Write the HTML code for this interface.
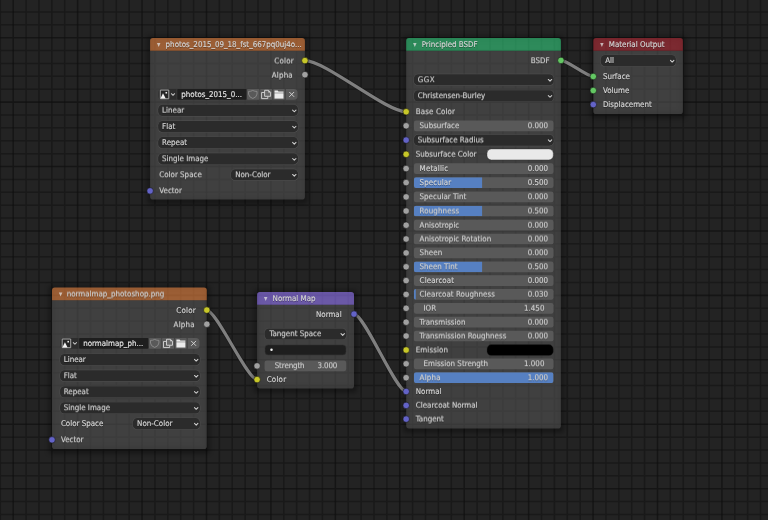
<!DOCTYPE html>
<html lang="en"><head><meta charset="utf-8"><title>Shader Node Editor</title>
<style>html,body{margin:0;padding:0;background:#232323;overflow:hidden}body{width:768px;height:520px}svg{display:block}text{font-family:"DejaVu Sans Condensed","Liberation Sans",sans-serif;white-space:pre}</style>
</head><body>
<svg width="768" height="520" viewBox="0 0 768 520" role="img" aria-label="Blender shader node editor">
<defs><filter id="sh" x="-20%" y="-20%" width="140%" height="140%" color-interpolation-filters="sRGB"><feGaussianBlur stdDeviation="2.4"/></filter><filter id="soft" x="0" y="0" width="768" height="520" filterUnits="userSpaceOnUse" color-interpolation-filters="sRGB"><feGaussianBlur stdDeviation="0.45"/></filter><filter id="t0" x="-5%" y="-40%" width="110%" height="200%" color-interpolation-filters="sRGB"><feConvolveMatrix order="1 2" kernelMatrix="1 0" edgeMode="none" result="g"/><feConvolveMatrix in="g" order="1 2" kernelMatrix="0.2 0.8" edgeMode="none" result="o"/><feColorMatrix in="o" type="matrix" values="0 0 0 0 0  0 0 0 0 0  0 0 0 0 0  0 0 0 0.36 0" result="s"/><feMerge><feMergeNode in="s"/><feMergeNode in="g"/></feMerge></filter><filter id="t1" x="-5%" y="-40%" width="110%" height="200%" color-interpolation-filters="sRGB"><feConvolveMatrix order="1 2" kernelMatrix="0.75 0.25" edgeMode="none" result="g"/><feConvolveMatrix in="g" order="1 2" kernelMatrix="0.2 0.8" edgeMode="none" result="o"/><feColorMatrix in="o" type="matrix" values="0 0 0 0 0  0 0 0 0 0  0 0 0 0 0  0 0 0 0.36 0" result="s"/><feMerge><feMergeNode in="s"/><feMergeNode in="g"/></feMerge></filter><filter id="t2" x="-5%" y="-40%" width="110%" height="200%" color-interpolation-filters="sRGB"><feConvolveMatrix order="1 2" kernelMatrix="0.5 0.5" edgeMode="none" result="g"/><feConvolveMatrix in="g" order="1 2" kernelMatrix="0.2 0.8" edgeMode="none" result="o"/><feColorMatrix in="o" type="matrix" values="0 0 0 0 0  0 0 0 0 0  0 0 0 0 0  0 0 0 0.36 0" result="s"/><feMerge><feMergeNode in="s"/><feMergeNode in="g"/></feMerge></filter><filter id="t3" x="-5%" y="-40%" width="110%" height="200%" color-interpolation-filters="sRGB"><feConvolveMatrix order="1 2" kernelMatrix="0.25 0.75" edgeMode="none" result="g"/><feConvolveMatrix in="g" order="1 2" kernelMatrix="0.2 0.8" edgeMode="none" result="o"/><feColorMatrix in="o" type="matrix" values="0 0 0 0 0  0 0 0 0 0  0 0 0 0 0  0 0 0 0.36 0" result="s"/><feMerge><feMergeNode in="s"/><feMergeNode in="g"/></feMerge></filter></defs>
<rect width="768" height="520" fill="#232323"/>
<g filter="url(#soft)">
<rect width="768" height="520" fill="#232323"/>
<g stroke="#191919" stroke-width="1.5" opacity="0.95">
<line x1="0.30" y1="0" x2="0.30" y2="520"/>
<line x1="26.07" y1="0" x2="26.07" y2="520"/>
<line x1="38.96" y1="0" x2="38.96" y2="520"/>
<line x1="51.84" y1="0" x2="51.84" y2="520"/>
<line x1="64.73" y1="0" x2="64.73" y2="520"/>
<line x1="90.50" y1="0" x2="90.50" y2="520"/>
<line x1="103.39" y1="0" x2="103.39" y2="520"/>
<line x1="116.27" y1="0" x2="116.27" y2="520"/>
<line x1="129.16" y1="0" x2="129.16" y2="520"/>
<line x1="154.93" y1="0" x2="154.93" y2="520"/>
<line x1="167.82" y1="0" x2="167.82" y2="520"/>
<line x1="180.70" y1="0" x2="180.70" y2="520"/>
<line x1="193.59" y1="0" x2="193.59" y2="520"/>
<line x1="219.36" y1="0" x2="219.36" y2="520"/>
<line x1="232.25" y1="0" x2="232.25" y2="520"/>
<line x1="245.13" y1="0" x2="245.13" y2="520"/>
<line x1="258.02" y1="0" x2="258.02" y2="520"/>
<line x1="283.79" y1="0" x2="283.79" y2="520"/>
<line x1="296.68" y1="0" x2="296.68" y2="520"/>
<line x1="309.56" y1="0" x2="309.56" y2="520"/>
<line x1="322.45" y1="0" x2="322.45" y2="520"/>
<line x1="348.22" y1="0" x2="348.22" y2="520"/>
<line x1="361.11" y1="0" x2="361.11" y2="520"/>
<line x1="373.99" y1="0" x2="373.99" y2="520"/>
<line x1="386.88" y1="0" x2="386.88" y2="520"/>
<line x1="412.65" y1="0" x2="412.65" y2="520"/>
<line x1="425.54" y1="0" x2="425.54" y2="520"/>
<line x1="438.42" y1="0" x2="438.42" y2="520"/>
<line x1="451.31" y1="0" x2="451.31" y2="520"/>
<line x1="477.08" y1="0" x2="477.08" y2="520"/>
<line x1="489.97" y1="0" x2="489.97" y2="520"/>
<line x1="502.85" y1="0" x2="502.85" y2="520"/>
<line x1="515.74" y1="0" x2="515.74" y2="520"/>
<line x1="541.51" y1="0" x2="541.51" y2="520"/>
<line x1="554.40" y1="0" x2="554.40" y2="520"/>
<line x1="567.28" y1="0" x2="567.28" y2="520"/>
<line x1="580.17" y1="0" x2="580.17" y2="520"/>
<line x1="605.94" y1="0" x2="605.94" y2="520"/>
<line x1="618.83" y1="0" x2="618.83" y2="520"/>
<line x1="631.71" y1="0" x2="631.71" y2="520"/>
<line x1="644.60" y1="0" x2="644.60" y2="520"/>
<line x1="670.37" y1="0" x2="670.37" y2="520"/>
<line x1="683.26" y1="0" x2="683.26" y2="520"/>
<line x1="696.14" y1="0" x2="696.14" y2="520"/>
<line x1="709.03" y1="0" x2="709.03" y2="520"/>
<line x1="734.80" y1="0" x2="734.80" y2="520"/>
<line x1="747.69" y1="0" x2="747.69" y2="520"/>
<line x1="760.57" y1="0" x2="760.57" y2="520"/>
<line x1="0" y1="-0.99" x2="768" y2="-0.99"/>
<line x1="0" y1="11.90" x2="768" y2="11.90"/>
<line x1="0" y1="24.79" x2="768" y2="24.79"/>
<line x1="0" y1="50.56" x2="768" y2="50.56"/>
<line x1="0" y1="63.44" x2="768" y2="63.44"/>
<line x1="0" y1="76.33" x2="768" y2="76.33"/>
<line x1="0" y1="89.22" x2="768" y2="89.22"/>
<line x1="0" y1="114.99" x2="768" y2="114.99"/>
<line x1="0" y1="127.87" x2="768" y2="127.87"/>
<line x1="0" y1="140.76" x2="768" y2="140.76"/>
<line x1="0" y1="153.65" x2="768" y2="153.65"/>
<line x1="0" y1="179.42" x2="768" y2="179.42"/>
<line x1="0" y1="192.30" x2="768" y2="192.30"/>
<line x1="0" y1="205.19" x2="768" y2="205.19"/>
<line x1="0" y1="218.08" x2="768" y2="218.08"/>
<line x1="0" y1="243.85" x2="768" y2="243.85"/>
<line x1="0" y1="256.73" x2="768" y2="256.73"/>
<line x1="0" y1="269.62" x2="768" y2="269.62"/>
<line x1="0" y1="282.51" x2="768" y2="282.51"/>
<line x1="0" y1="308.28" x2="768" y2="308.28"/>
<line x1="0" y1="321.16" x2="768" y2="321.16"/>
<line x1="0" y1="334.05" x2="768" y2="334.05"/>
<line x1="0" y1="346.94" x2="768" y2="346.94"/>
<line x1="0" y1="372.71" x2="768" y2="372.71"/>
<line x1="0" y1="385.59" x2="768" y2="385.59"/>
<line x1="0" y1="398.48" x2="768" y2="398.48"/>
<line x1="0" y1="411.37" x2="768" y2="411.37"/>
<line x1="0" y1="437.14" x2="768" y2="437.14"/>
<line x1="0" y1="450.02" x2="768" y2="450.02"/>
<line x1="0" y1="462.91" x2="768" y2="462.91"/>
<line x1="0" y1="475.80" x2="768" y2="475.80"/>
<line x1="0" y1="501.57" x2="768" y2="501.57"/>
<line x1="0" y1="514.45" x2="768" y2="514.45"/>
</g>
<g stroke="#0e0e0e" stroke-width="1.55" opacity="0.62">
<line x1="13.19" y1="0" x2="13.19" y2="520"/>
<line x1="77.62" y1="0" x2="77.62" y2="520"/>
<line x1="142.05" y1="0" x2="142.05" y2="520"/>
<line x1="206.48" y1="0" x2="206.48" y2="520"/>
<line x1="270.91" y1="0" x2="270.91" y2="520"/>
<line x1="335.34" y1="0" x2="335.34" y2="520"/>
<line x1="399.77" y1="0" x2="399.77" y2="520"/>
<line x1="464.20" y1="0" x2="464.20" y2="520"/>
<line x1="528.63" y1="0" x2="528.63" y2="520"/>
<line x1="593.06" y1="0" x2="593.06" y2="520"/>
<line x1="657.49" y1="0" x2="657.49" y2="520"/>
<line x1="721.92" y1="0" x2="721.92" y2="520"/>
<line x1="0" y1="37.67" x2="768" y2="37.67"/>
<line x1="0" y1="102.10" x2="768" y2="102.10"/>
<line x1="0" y1="166.53" x2="768" y2="166.53"/>
<line x1="0" y1="230.96" x2="768" y2="230.96"/>
<line x1="0" y1="295.39" x2="768" y2="295.39"/>
<line x1="0" y1="359.82" x2="768" y2="359.82"/>
<line x1="0" y1="424.25" x2="768" y2="424.25"/>
<line x1="0" y1="488.68" x2="768" y2="488.68"/>
</g>
<path d="M305.00 60.60 C325.22 60.60 385.88 111.75 406.10 111.75" fill="none" stroke="#141414" stroke-width="4.4" stroke-linecap="round" opacity="0.6"/>
<path d="M305.00 60.60 C325.22 60.60 385.88 111.75 406.10 111.75" fill="none" stroke="#7f7f7f" stroke-width="3.2" stroke-linecap="round"/>
<path d="M206.50 310.00 C216.62 310.00 246.98 379.60 257.10 379.60" fill="none" stroke="#141414" stroke-width="4.4" stroke-linecap="round" opacity="0.6"/>
<path d="M206.50 310.00 C216.62 310.00 246.98 379.60 257.10 379.60" fill="none" stroke="#7f7f7f" stroke-width="3.2" stroke-linecap="round"/>
<path d="M354.00 314.10 C364.44 314.10 395.76 391.50 406.20 391.50" fill="none" stroke="#141414" stroke-width="4.4" stroke-linecap="round" opacity="0.6"/>
<path d="M354.00 314.10 C364.44 314.10 395.76 391.50 406.20 391.50" fill="none" stroke="#7f7f7f" stroke-width="3.2" stroke-linecap="round"/>
<path d="M560.90 60.40 C567.36 60.40 586.74 76.50 593.20 76.50" fill="none" stroke="#141414" stroke-width="4.4" stroke-linecap="round" opacity="0.6"/>
<path d="M560.90 60.40 C567.36 60.40 586.74 76.50 593.20 76.50" fill="none" stroke="#7f7f7f" stroke-width="3.2" stroke-linecap="round"/>
<path fill-rule="evenodd" d="M147.50 36.50 h160.00 v166.90 h-160.00 Z M151.70 39.70 h151.60 v158.30 h-151.60 Z" fill="#000" opacity="0.42" filter="url(#sh)"/>
<path d="M150.10 50.70 H304.90 V196.80 a2.8 2.8 0 0 1 -2.8 2.8 H152.90 a2.8 2.8 0 0 1 -2.8 -2.8 Z" fill="#535353" opacity="0.6"/>
<path d="M150.10 50.70 V40.90 a2.8 2.8 0 0 1 2.8 -2.8 H302.10 a2.8 2.8 0 0 1 2.8 2.8 V50.70 Z" fill="#ed8743" opacity="0.6"/>
<path d="M156.95 43.00 H160.45 L158.70 46.90 Z" fill="#e0e0e0" opacity="0.75"/>
<path d="M176.60 89.05 H162.30 a3.8 3.8 0 0 0 -3.8 3.8 V95.95 a3.8 3.8 0 0 0 3.8 3.8 H176.60 Z" fill="#2c2c2c"/>
<rect x="160.30" y="90.05" width="8.5" height="8.7" rx="0.2" fill="#262626" stroke="#eeeeee" stroke-width="0.65"/>
<path d="M160.50 98.55 L163.00 93.35 L165.70 98.55 Z" fill="#f2f2f2"/>
<rect x="165.50" y="91.95" width="1.6" height="1.6" fill="#ececec"/>
<path d="M171.40 93.70 L173.00 95.30 L174.60 93.70" fill="none" stroke="#c4c4c4" stroke-width="1.05" stroke-linecap="round" stroke-linejoin="round"/>
<rect x="177.20" y="89.05" width="69.20" height="10.70" rx="0.8" ry="0.8" fill="#1e1e1e"/>
<rect x="247.10" y="89.05" width="12.40" height="10.70" rx="0.8" ry="0.8" fill="#595959"/>
<rect x="260.10" y="89.05" width="12.20" height="10.70" rx="0.8" ry="0.8" fill="#595959"/>
<rect x="273.20" y="89.05" width="11.60" height="10.70" rx="0.8" ry="0.8" fill="#595959"/>
<path d="M285.80 89.05 H293.80 a3.8 3.8 0 0 1 3.8 3.8 V95.95 a3.8 3.8 0 0 1 -3.8 3.8 H285.80 Z" fill="#595959"/>
<path d="M252.80 90.50 Q255.00 91.50 257.00 91.40 V94.10 Q256.70 97.20 252.80 98.50 Q248.90 97.20 248.60 94.10 V91.40 Q250.60 91.50 252.80 90.50 Z" fill="none" stroke="#939393" stroke-width="0.8" stroke-linejoin="round"/>
<path d="M264.60 92.50 H261.60 V98.60 H267.80 V96.40" fill="none" stroke="#dedede" stroke-width="0.85"/>
<path d="M264.60 90.30 H268.60 L270.60 92.30 V96.30 H264.60 Z" fill="#6a6a6a" stroke="#dedede" stroke-width="0.85" stroke-linejoin="round"/>
<path d="M268.40 90.30 V92.40 H270.60 Z" fill="#e6e6e6"/>
<path d="M274.50 90.50 H277.60 L278.50 91.50 H283.50 V92.80 H274.50 Z" fill="#ececec"/>
<rect x="274.50" y="93.25" width="9.0" height="5.35" fill="#ececec"/>
<path d="M289.30 92.00 L294.10 96.80 M294.10 92.00 L289.30 96.80" stroke="#dcdcdc" stroke-width="0.9" fill="none"/>
<rect x="157.70" y="104.40" width="140.80" height="12.10" rx="4.8" ry="4.8" fill="#555555" opacity="0.8"/>
<rect x="158.15" y="104.75" width="139.90" height="11.20" rx="4.4" ry="4.4" fill="#2b2b2b"/>
<path d="M292.60 110.05 L294.30 111.75 L296.00 110.05" fill="none" stroke="#d0d0d0" stroke-width="1.05" stroke-linecap="round" stroke-linejoin="round"/>
<rect x="157.70" y="120.60" width="140.80" height="12.10" rx="4.8" ry="4.8" fill="#555555" opacity="0.8"/>
<rect x="158.15" y="120.95" width="139.90" height="11.20" rx="4.4" ry="4.4" fill="#2b2b2b"/>
<path d="M292.60 126.25 L294.30 127.95 L296.00 126.25" fill="none" stroke="#d0d0d0" stroke-width="1.05" stroke-linecap="round" stroke-linejoin="round"/>
<rect x="157.70" y="136.75" width="140.80" height="12.10" rx="4.8" ry="4.8" fill="#555555" opacity="0.8"/>
<rect x="158.15" y="137.10" width="139.90" height="11.20" rx="4.4" ry="4.4" fill="#2b2b2b"/>
<path d="M292.60 142.40 L294.30 144.10 L296.00 142.40" fill="none" stroke="#d0d0d0" stroke-width="1.05" stroke-linecap="round" stroke-linejoin="round"/>
<rect x="157.70" y="152.85" width="140.80" height="12.10" rx="4.8" ry="4.8" fill="#555555" opacity="0.8"/>
<rect x="158.15" y="153.20" width="139.90" height="11.20" rx="4.4" ry="4.4" fill="#2b2b2b"/>
<path d="M292.60 158.50 L294.30 160.20 L296.00 158.50" fill="none" stroke="#d0d0d0" stroke-width="1.05" stroke-linecap="round" stroke-linejoin="round"/>
<rect x="230.50" y="168.80" width="68.00" height="12.10" rx="4.8" ry="4.8" fill="#555555" opacity="0.8"/>
<rect x="230.95" y="169.15" width="67.10" height="11.20" rx="4.4" ry="4.4" fill="#2b2b2b"/>
<path d="M292.60 174.45 L294.30 176.15 L296.00 174.45" fill="none" stroke="#d0d0d0" stroke-width="1.05" stroke-linecap="round" stroke-linejoin="round"/>
<circle cx="304.90" cy="60.60" r="3.25" fill="#c7c729" stroke="#161616" stroke-width="0.6"/>
<circle cx="304.90" cy="74.70" r="3.25" fill="#a1a1a1" stroke="#161616" stroke-width="0.6"/>
<circle cx="150.10" cy="190.90" r="3.25" fill="#6363c7" stroke="#161616" stroke-width="0.6"/>
<path fill-rule="evenodd" d="M49.40 286.00 h160.00 v166.90 h-160.00 Z M53.60 289.20 h151.60 v158.30 h-151.60 Z" fill="#000" opacity="0.42" filter="url(#sh)"/>
<path d="M52.00 300.20 H206.80 V446.30 a2.8 2.8 0 0 1 -2.8 2.8 H54.80 a2.8 2.8 0 0 1 -2.8 -2.8 Z" fill="#535353" opacity="0.6"/>
<path d="M52.00 300.20 V290.40 a2.8 2.8 0 0 1 2.8 -2.8 H204.00 a2.8 2.8 0 0 1 2.8 2.8 V300.20 Z" fill="#ed8743" opacity="0.6"/>
<path d="M58.85 292.50 H62.35 L60.60 296.40 Z" fill="#e0e0e0" opacity="0.75"/>
<path d="M78.50 338.00 H64.20 a3.8 3.8 0 0 0 -3.8 3.8 V344.90 a3.8 3.8 0 0 0 3.8 3.8 H78.50 Z" fill="#2c2c2c"/>
<rect x="62.20" y="339.00" width="8.5" height="8.7" rx="0.2" fill="#262626" stroke="#eeeeee" stroke-width="0.65"/>
<path d="M62.40 347.50 L64.90 342.30 L67.60 347.50 Z" fill="#f2f2f2"/>
<rect x="67.40" y="340.90" width="1.6" height="1.6" fill="#ececec"/>
<path d="M73.30 342.65 L74.90 344.25 L76.50 342.65" fill="none" stroke="#c4c4c4" stroke-width="1.05" stroke-linecap="round" stroke-linejoin="round"/>
<rect x="79.10" y="338.00" width="69.20" height="10.70" rx="0.8" ry="0.8" fill="#1e1e1e"/>
<rect x="149.00" y="338.00" width="12.40" height="10.70" rx="0.8" ry="0.8" fill="#595959"/>
<rect x="162.00" y="338.00" width="12.20" height="10.70" rx="0.8" ry="0.8" fill="#595959"/>
<rect x="175.10" y="338.00" width="11.60" height="10.70" rx="0.8" ry="0.8" fill="#595959"/>
<path d="M187.70 338.00 H195.70 a3.8 3.8 0 0 1 3.8 3.8 V344.90 a3.8 3.8 0 0 1 -3.8 3.8 H187.70 Z" fill="#595959"/>
<path d="M154.70 339.45 Q156.90 340.45 158.90 340.35 V343.05 Q158.60 346.15 154.70 347.45 Q150.80 346.15 150.50 343.05 V340.35 Q152.50 340.45 154.70 339.45 Z" fill="none" stroke="#939393" stroke-width="0.8" stroke-linejoin="round"/>
<path d="M166.50 341.45 H163.50 V347.55 H169.70 V345.35" fill="none" stroke="#dedede" stroke-width="0.85"/>
<path d="M166.50 339.25 H170.50 L172.50 341.25 V345.25 H166.50 Z" fill="#6a6a6a" stroke="#dedede" stroke-width="0.85" stroke-linejoin="round"/>
<path d="M170.30 339.25 V341.35 H172.50 Z" fill="#e6e6e6"/>
<path d="M176.40 339.45 H179.50 L180.40 340.45 H185.40 V341.75 H176.40 Z" fill="#ececec"/>
<rect x="176.40" y="342.20" width="9.0" height="5.35" fill="#ececec"/>
<path d="M191.20 340.95 L196.00 345.75 M196.00 340.95 L191.20 345.75" stroke="#dcdcdc" stroke-width="0.9" fill="none"/>
<rect x="59.60" y="353.70" width="140.80" height="12.10" rx="4.8" ry="4.8" fill="#555555" opacity="0.8"/>
<rect x="60.05" y="354.05" width="139.90" height="11.20" rx="4.4" ry="4.4" fill="#2b2b2b"/>
<path d="M194.50 359.35 L196.20 361.05 L197.90 359.35" fill="none" stroke="#d0d0d0" stroke-width="1.05" stroke-linecap="round" stroke-linejoin="round"/>
<rect x="59.60" y="369.80" width="140.80" height="12.10" rx="4.8" ry="4.8" fill="#555555" opacity="0.8"/>
<rect x="60.05" y="370.15" width="139.90" height="11.20" rx="4.4" ry="4.4" fill="#2b2b2b"/>
<path d="M194.50 375.45 L196.20 377.15 L197.90 375.45" fill="none" stroke="#d0d0d0" stroke-width="1.05" stroke-linecap="round" stroke-linejoin="round"/>
<rect x="59.60" y="385.90" width="140.80" height="12.10" rx="4.8" ry="4.8" fill="#555555" opacity="0.8"/>
<rect x="60.05" y="386.25" width="139.90" height="11.20" rx="4.4" ry="4.4" fill="#2b2b2b"/>
<path d="M194.50 391.55 L196.20 393.25 L197.90 391.55" fill="none" stroke="#d0d0d0" stroke-width="1.05" stroke-linecap="round" stroke-linejoin="round"/>
<rect x="59.60" y="401.95" width="140.80" height="12.10" rx="4.8" ry="4.8" fill="#555555" opacity="0.8"/>
<rect x="60.05" y="402.30" width="139.90" height="11.20" rx="4.4" ry="4.4" fill="#2b2b2b"/>
<path d="M194.50 407.60 L196.20 409.30 L197.90 407.60" fill="none" stroke="#d0d0d0" stroke-width="1.05" stroke-linecap="round" stroke-linejoin="round"/>
<rect x="132.40" y="417.75" width="68.00" height="12.10" rx="4.8" ry="4.8" fill="#555555" opacity="0.8"/>
<rect x="132.85" y="418.10" width="67.10" height="11.20" rx="4.4" ry="4.4" fill="#2b2b2b"/>
<path d="M194.50 423.40 L196.20 425.10 L197.90 423.40" fill="none" stroke="#d0d0d0" stroke-width="1.05" stroke-linecap="round" stroke-linejoin="round"/>
<circle cx="206.80" cy="310.10" r="3.25" fill="#c7c729" stroke="#161616" stroke-width="0.6"/>
<circle cx="206.80" cy="324.20" r="3.25" fill="#a1a1a1" stroke="#161616" stroke-width="0.6"/>
<circle cx="52.00" cy="439.85" r="3.25" fill="#6363c7" stroke="#161616" stroke-width="0.6"/>
<path fill-rule="evenodd" d="M254.50 290.50 h102.10 v101.80 h-102.10 Z M258.70 293.70 h93.70 v93.20 h-93.70 Z" fill="#000" opacity="0.42" filter="url(#sh)"/>
<path d="M257.10 304.70 H354.00 V385.70 a2.8 2.8 0 0 1 -2.8 2.8 H259.90 a2.8 2.8 0 0 1 -2.8 -2.8 Z" fill="#535353" opacity="0.6"/>
<path d="M257.10 304.70 V294.90 a2.8 2.8 0 0 1 2.8 -2.8 H351.20 a2.8 2.8 0 0 1 2.8 2.8 V304.70 Z" fill="#9b7dff" opacity="0.6"/>
<path d="M263.95 297.00 H267.45 L265.70 300.90 Z" fill="#e0e0e0" opacity="0.75"/>
<rect x="264.10" y="328.10" width="82.80" height="11.90" rx="4.8" ry="4.8" fill="#555555" opacity="0.8"/>
<rect x="264.55" y="328.45" width="81.90" height="11.00" rx="4.4" ry="4.4" fill="#2b2b2b"/>
<path d="M341.00 333.65 L342.70 335.35 L344.40 333.65" fill="none" stroke="#d0d0d0" stroke-width="1.05" stroke-linecap="round" stroke-linejoin="round"/>
<rect x="265.00" y="344.90" width="81.00" height="10.00" rx="3.2" ry="3.2" fill="#1e1e1e" stroke="#333" stroke-width="0.6"/>
<circle cx="271.50" cy="349.80" r="1.25" fill="#f4f4f4"/>
<rect x="264.60" y="360.45" width="81.60" height="10.70" rx="2.2" ry="2.2" fill="#595959"/>
<circle cx="354.00" cy="314.10" r="3.25" fill="#6363c7" stroke="#161616" stroke-width="0.6"/>
<circle cx="257.10" cy="365.90" r="3.25" fill="#a1a1a1" stroke="#161616" stroke-width="0.6"/>
<circle cx="257.10" cy="379.60" r="3.25" fill="#c7c729" stroke="#161616" stroke-width="0.6"/>
<path fill-rule="evenodd" d="M403.60 36.50 h159.90 v395.80 h-159.90 Z M407.80 39.70 h151.50 v387.20 h-151.50 Z" fill="#000" opacity="0.42" filter="url(#sh)"/>
<path d="M406.20 50.70 H560.90 V425.70 a2.8 2.8 0 0 1 -2.8 2.8 H409.00 a2.8 2.8 0 0 1 -2.8 -2.8 Z" fill="#535353" opacity="0.6"/>
<path d="M406.20 50.70 V40.90 a2.8 2.8 0 0 1 2.8 -2.8 H558.10 a2.8 2.8 0 0 1 2.8 2.8 V50.70 Z" fill="#35d080" opacity="0.6"/>
<path d="M413.05 43.00 H416.55 L414.80 46.90 Z" fill="#e0e0e0" opacity="0.75"/>
<circle cx="560.90" cy="60.40" r="3.25" fill="#63c763" stroke="#161616" stroke-width="0.6"/>
<rect x="413.40" y="73.80" width="140.80" height="12.10" rx="4.8" ry="4.8" fill="#555555" opacity="0.8"/>
<rect x="413.85" y="74.15" width="139.90" height="11.20" rx="4.4" ry="4.4" fill="#2b2b2b"/>
<path d="M548.30 79.45 L550.00 81.15 L551.70 79.45" fill="none" stroke="#d0d0d0" stroke-width="1.05" stroke-linecap="round" stroke-linejoin="round"/>
<rect x="413.40" y="89.90" width="140.80" height="12.10" rx="4.8" ry="4.8" fill="#555555" opacity="0.8"/>
<rect x="413.85" y="90.25" width="139.90" height="11.20" rx="4.4" ry="4.4" fill="#2b2b2b"/>
<path d="M548.30 95.55 L550.00 97.25 L551.70 95.55" fill="none" stroke="#d0d0d0" stroke-width="1.05" stroke-linecap="round" stroke-linejoin="round"/>
<circle cx="406.20" cy="111.75" r="3.25" fill="#c7c729" stroke="#161616" stroke-width="0.6"/>
<rect x="413.90" y="120.45" width="139.60" height="10.70" rx="2.2" ry="2.2" fill="#595959"/>
<circle cx="406.20" cy="125.80" r="3.25" fill="#a1a1a1" stroke="#161616" stroke-width="0.6"/>
<rect x="413.40" y="134.30" width="140.80" height="11.90" rx="4.8" ry="4.8" fill="#555555" opacity="0.8"/>
<rect x="413.85" y="134.65" width="139.90" height="11.00" rx="4.4" ry="4.4" fill="#2b2b2b"/>
<path d="M548.30 139.85 L550.00 141.55 L551.70 139.85" fill="none" stroke="#d0d0d0" stroke-width="1.05" stroke-linecap="round" stroke-linejoin="round"/>
<circle cx="406.20" cy="140.10" r="3.25" fill="#6363c7" stroke="#161616" stroke-width="0.6"/>
<rect x="487.00" y="148.90" width="66.30" height="11.00" rx="4.4" ry="4.4" fill="#e9e9e9" stroke="#2a2a2a" stroke-width="0.4"/>
<circle cx="406.20" cy="154.30" r="3.25" fill="#c7c729" stroke="#161616" stroke-width="0.6"/>
<rect x="413.90" y="163.25" width="139.60" height="10.70" rx="2.2" ry="2.2" fill="#595959"/>
<circle cx="406.20" cy="168.60" r="3.25" fill="#a1a1a1" stroke="#161616" stroke-width="0.6"/>
<rect x="413.90" y="177.25" width="139.60" height="10.70" rx="2.2" ry="2.2" fill="#595959"/>
<clipPath id="c236"><rect x="413.90" y="177.25" width="68.19" height="10.70"/></clipPath>
<rect x="413.90" y="177.25" width="139.60" height="10.70" rx="2.2" ry="2.2" fill="#5680c2" clip-path="url(#c236)"/>
<circle cx="406.20" cy="182.60" r="3.25" fill="#a1a1a1" stroke="#161616" stroke-width="0.6"/>
<rect x="413.90" y="191.55" width="139.60" height="10.70" rx="2.2" ry="2.2" fill="#595959"/>
<circle cx="406.20" cy="196.90" r="3.25" fill="#a1a1a1" stroke="#161616" stroke-width="0.6"/>
<rect x="413.90" y="205.65" width="139.60" height="10.70" rx="2.2" ry="2.2" fill="#595959"/>
<clipPath id="c242"><rect x="413.90" y="205.65" width="68.19" height="10.70"/></clipPath>
<rect x="413.90" y="205.65" width="139.60" height="10.70" rx="2.2" ry="2.2" fill="#5680c2" clip-path="url(#c242)"/>
<circle cx="406.20" cy="211.00" r="3.25" fill="#a1a1a1" stroke="#161616" stroke-width="0.6"/>
<rect x="413.90" y="219.85" width="139.60" height="10.70" rx="2.2" ry="2.2" fill="#595959"/>
<circle cx="406.20" cy="225.20" r="3.25" fill="#a1a1a1" stroke="#161616" stroke-width="0.6"/>
<rect x="413.90" y="233.65" width="139.60" height="10.70" rx="2.2" ry="2.2" fill="#595959"/>
<circle cx="406.20" cy="239.00" r="3.25" fill="#a1a1a1" stroke="#161616" stroke-width="0.6"/>
<rect x="413.90" y="247.55" width="139.60" height="10.70" rx="2.2" ry="2.2" fill="#595959"/>
<circle cx="406.20" cy="252.90" r="3.25" fill="#a1a1a1" stroke="#161616" stroke-width="0.6"/>
<rect x="413.90" y="261.45" width="139.60" height="10.70" rx="2.2" ry="2.2" fill="#595959"/>
<clipPath id="c252"><rect x="413.90" y="261.45" width="68.19" height="10.70"/></clipPath>
<rect x="413.90" y="261.45" width="139.60" height="10.70" rx="2.2" ry="2.2" fill="#5680c2" clip-path="url(#c252)"/>
<circle cx="406.20" cy="266.80" r="3.25" fill="#a1a1a1" stroke="#161616" stroke-width="0.6"/>
<rect x="413.90" y="275.25" width="139.60" height="10.70" rx="2.2" ry="2.2" fill="#595959"/>
<circle cx="406.20" cy="280.60" r="3.25" fill="#a1a1a1" stroke="#161616" stroke-width="0.6"/>
<rect x="413.90" y="289.05" width="139.60" height="10.70" rx="2.2" ry="2.2" fill="#595959"/>
<clipPath id="c258"><rect x="413.90" y="289.05" width="1.90" height="10.70"/></clipPath>
<rect x="413.90" y="289.05" width="139.60" height="10.70" rx="2.2" ry="2.2" fill="#5680c2" clip-path="url(#c258)"/>
<circle cx="406.20" cy="294.40" r="3.25" fill="#a1a1a1" stroke="#161616" stroke-width="0.6"/>
<rect x="413.90" y="302.95" width="139.60" height="10.70" rx="2.2" ry="2.2" fill="#595959"/>
<circle cx="406.20" cy="308.30" r="3.25" fill="#a1a1a1" stroke="#161616" stroke-width="0.6"/>
<rect x="413.90" y="316.85" width="139.60" height="10.70" rx="2.2" ry="2.2" fill="#595959"/>
<circle cx="406.20" cy="322.20" r="3.25" fill="#a1a1a1" stroke="#161616" stroke-width="0.6"/>
<rect x="413.90" y="330.65" width="139.60" height="10.70" rx="2.2" ry="2.2" fill="#595959"/>
<circle cx="406.20" cy="336.00" r="3.25" fill="#a1a1a1" stroke="#161616" stroke-width="0.6"/>
<rect x="487.00" y="344.60" width="66.30" height="11.00" rx="4.4" ry="4.4" fill="#000000" stroke="#2a2a2a" stroke-width="0.4"/>
<circle cx="406.20" cy="350.00" r="3.25" fill="#c7c729" stroke="#161616" stroke-width="0.6"/>
<rect x="413.90" y="358.45" width="139.60" height="10.70" rx="2.2" ry="2.2" fill="#595959"/>
<circle cx="406.20" cy="363.80" r="3.25" fill="#a1a1a1" stroke="#161616" stroke-width="0.6"/>
<rect x="413.90" y="372.35" width="139.60" height="10.70" rx="2.2" ry="2.2" fill="#595959"/>
<clipPath id="c272"><rect x="413.90" y="372.35" width="139.60" height="10.70"/></clipPath>
<rect x="413.90" y="372.35" width="139.60" height="10.70" rx="2.2" ry="2.2" fill="#5680c2" clip-path="url(#c272)"/>
<circle cx="406.20" cy="377.70" r="3.25" fill="#a1a1a1" stroke="#161616" stroke-width="0.6"/>
<circle cx="406.20" cy="391.50" r="3.25" fill="#6363c7" stroke="#161616" stroke-width="0.6"/>
<circle cx="406.20" cy="405.40" r="3.25" fill="#6363c7" stroke="#161616" stroke-width="0.6"/>
<circle cx="406.20" cy="419.10" r="3.25" fill="#6363c7" stroke="#161616" stroke-width="0.6"/>
<path fill-rule="evenodd" d="M590.70 36.50 h94.80 v81.30 h-94.80 Z M594.90 39.70 h86.40 v72.70 h-86.40 Z" fill="#000" opacity="0.42" filter="url(#sh)"/>
<path d="M593.30 50.70 H682.90 V111.20 a2.8 2.8 0 0 1 -2.8 2.8 H596.10 a2.8 2.8 0 0 1 -2.8 -2.8 Z" fill="#535353" opacity="0.6"/>
<path d="M593.30 50.70 V40.90 a2.8 2.8 0 0 1 2.8 -2.8 H680.10 a2.8 2.8 0 0 1 2.8 2.8 V50.70 Z" fill="#b72f3a" opacity="0.6"/>
<path d="M600.15 43.00 H603.65 L601.90 46.90 Z" fill="#e0e0e0" opacity="0.75"/>
<rect x="600.30" y="54.70" width="76.10" height="12.10" rx="4.8" ry="4.8" fill="#555555" opacity="0.8"/>
<rect x="600.75" y="55.05" width="75.20" height="11.20" rx="4.4" ry="4.4" fill="#2b2b2b"/>
<path d="M670.50 60.35 L672.20 62.05 L673.90 60.35" fill="none" stroke="#d0d0d0" stroke-width="1.05" stroke-linecap="round" stroke-linejoin="round"/>
<circle cx="593.30" cy="76.50" r="3.25" fill="#63c763" stroke="#161616" stroke-width="0.6"/>
<circle cx="593.30" cy="90.55" r="3.25" fill="#63c763" stroke="#161616" stroke-width="0.6"/>
<circle cx="593.30" cy="104.60" r="3.25" fill="#6363c7" stroke="#161616" stroke-width="0.6"/>
<g font-size="7.9" fill="#d6d6d6" stroke="#d6d6d6" stroke-width="0.16">
<text filter="url(#t0)" x="165.60" y="47" textLength="136.21">photos_2015_09_18_fst_667pq0uj4o...</text>
<text filter="url(#t2)" x="293.70" y="63" text-anchor="end" textLength="19.35">Color</text>
<text filter="url(#t3)" x="292.70" y="77" text-anchor="end" textLength="21.01">Alpha</text>
<text filter="url(#t0)" x="181.30" y="97" fill="#e4e4e4" stroke="#e4e4e4" textLength="60.68">photos_2015_0...</text>
<text filter="url(#t3)" x="162.10" y="112" textLength="22.09">Linear</text>
<text filter="url(#t0)" x="162.10" y="129" textLength="13.20">Flat</text>
<text filter="url(#t0)" x="162.10" y="145" textLength="24.98">Repeat</text>
<text filter="url(#t1)" x="162.10" y="161" textLength="46.37">Single Image</text>
<text filter="url(#t1)" x="159.30" y="177" textLength="42.47">Color Space</text>
<text filter="url(#t1)" x="235.20" y="177" textLength="35.29">Non-Color</text>
<text filter="url(#t1)" x="159.30" y="193" textLength="22.58">Vector</text>
<text filter="url(#t2)" x="66.70" y="296" textLength="97.59">normalmap_photoshop.png</text>
<text filter="url(#t0)" x="195.60" y="313" text-anchor="end" textLength="19.35">Color</text>
<text filter="url(#t1)" x="194.60" y="327" text-anchor="end" textLength="21.01">Alpha</text>
<text filter="url(#t0)" x="83.20" y="346" fill="#e4e4e4" stroke="#e4e4e4" textLength="60.02">normalmap_ph...</text>
<text filter="url(#t0)" x="63.70" y="362" textLength="22.09">Linear</text>
<text filter="url(#t1)" x="63.70" y="378" textLength="13.20">Flat</text>
<text filter="url(#t1)" x="63.70" y="394" textLength="24.98">Repeat</text>
<text filter="url(#t1)" x="63.70" y="410" textLength="46.37">Single Image</text>
<text filter="url(#t0)" x="60.90" y="426" textLength="42.47">Color Space</text>
<text filter="url(#t0)" x="137.10" y="426" textLength="35.29">Non-Color</text>
<text filter="url(#t1)" x="60.90" y="442" textLength="22.58">Vector</text>
<text filter="url(#t0)" x="272.60" y="301" textLength="42.96">Normal Map</text>
<text filter="url(#t0)" x="341.70" y="317" text-anchor="end" textLength="25.70">Normal</text>
<text filter="url(#t1)" x="269.40" y="336" textLength="51.99">Tangent Space</text>
<text filter="url(#t1)" x="274.70" y="368" textLength="29.93">Strength</text>
<text filter="url(#t1)" x="337.30" y="368" text-anchor="end" textLength="19.74">3.000</text>
<text filter="url(#t0)" x="266.70" y="382" textLength="19.35">Color</text>
<text filter="url(#t0)" x="421.70" y="47" textLength="55.87">Principled BSDF</text>
<text filter="url(#t1)" x="549.50" y="63" text-anchor="end" textLength="18.81">BSDF</text>
<text filter="url(#t1)" x="417.80" y="82" textLength="16.88">GGX</text>
<text filter="url(#t1)" x="417.80" y="98" textLength="67.46">Christensen-Burley</text>
<text filter="url(#t1)" x="415.80" y="114" textLength="39.12">Base Color</text>
<text filter="url(#t1)" x="419.60" y="128" textLength="39.80">Subsurface</text>
<text filter="url(#t1)" x="548.10" y="128" text-anchor="end" textLength="20.34">0.000</text>
<text filter="url(#t2)" x="417.80" y="142" textLength="65.87">Subsurface Radius</text>
<text filter="url(#t3)" x="415.80" y="156" textLength="60.61">Subsurface Color</text>
<text filter="url(#t0)" x="419.60" y="171" textLength="28.48">Metallic</text>
<text filter="url(#t0)" x="548.10" y="171" text-anchor="end" textLength="20.34">0.000</text>
<text filter="url(#t0)" x="419.60" y="185" textLength="31.56">Specular</text>
<text filter="url(#t0)" x="548.10" y="185" text-anchor="end" textLength="20.34">0.500</text>
<text filter="url(#t1)" x="419.60" y="199" textLength="46.68">Specular Tint</text>
<text filter="url(#t1)" x="548.10" y="199" text-anchor="end" textLength="20.34">0.000</text>
<text filter="url(#t2)" x="419.60" y="213" textLength="39.54">Roughness</text>
<text filter="url(#t2)" x="548.10" y="213" text-anchor="end" textLength="20.34">0.500</text>
<text filter="url(#t3)" x="419.60" y="227" textLength="39.67">Anisotropic</text>
<text filter="url(#t3)" x="548.10" y="227" text-anchor="end" textLength="20.34">0.000</text>
<text filter="url(#t2)" x="419.60" y="241" textLength="71.61">Anisotropic Rotation</text>
<text filter="url(#t2)" x="548.10" y="241" text-anchor="end" textLength="20.34">0.000</text>
<text filter="url(#t1)" x="419.60" y="255" textLength="22.77">Sheen</text>
<text filter="url(#t1)" x="548.10" y="255" text-anchor="end" textLength="20.34">0.000</text>
<text filter="url(#t1)" x="419.60" y="269" textLength="37.89">Sheen Tint</text>
<text filter="url(#t1)" x="548.10" y="269" text-anchor="end" textLength="20.34">0.500</text>
<text filter="url(#t0)" x="419.60" y="283" textLength="34.41">Clearcoat</text>
<text filter="url(#t0)" x="548.10" y="283" text-anchor="end" textLength="20.34">0.000</text>
<text filter="url(#t3)" x="419.60" y="296" textLength="75.31">Clearcoat Roughness</text>
<text filter="url(#t3)" x="548.10" y="296" text-anchor="end" textLength="20.34">0.030</text>
<text filter="url(#t3)" x="423.50" y="310" textLength="12.63">IOR</text>
<text filter="url(#t3)" x="544.40" y="310" text-anchor="end" textLength="20.34">1.450</text>
<text filter="url(#t3)" x="419.60" y="324" textLength="45.80">Transmission</text>
<text filter="url(#t3)" x="548.10" y="324" text-anchor="end" textLength="20.34">0.000</text>
<text filter="url(#t2)" x="419.60" y="338" textLength="86.79">Transmission Roughness</text>
<text filter="url(#t2)" x="548.10" y="338" text-anchor="end" textLength="20.34">0.000</text>
<text filter="url(#t2)" x="415.80" y="352" textLength="32.12">Emission</text>
<text filter="url(#t1)" x="423.50" y="366" textLength="64.61">Emission Strength</text>
<text filter="url(#t1)" x="544.40" y="366" text-anchor="end" textLength="20.34">1.000</text>
<text filter="url(#t1)" x="419.60" y="380" textLength="21.01">Alpha</text>
<text filter="url(#t1)" x="548.10" y="380" text-anchor="end" textLength="20.34">1.000</text>
<text filter="url(#t0)" x="415.80" y="394" textLength="25.70">Normal</text>
<text filter="url(#t3)" x="415.80" y="407" textLength="61.77">Clearcoat Normal</text>
<text filter="url(#t2)" x="415.80" y="421" textLength="28.07">Tangent</text>
<text filter="url(#t0)" x="608.80" y="47" textLength="55.82">Material Output</text>
<text filter="url(#t0)" x="605.20" y="63" textLength="8.81">All</text>
<text filter="url(#t0)" x="602.90" y="79" textLength="27.08">Surface</text>
<text filter="url(#t0)" x="602.90" y="93" textLength="26.37">Volume</text>
<text filter="url(#t0)" x="602.90" y="107" textLength="48.87">Displacement</text>
</g>
</g>
</svg>
</body></html>
